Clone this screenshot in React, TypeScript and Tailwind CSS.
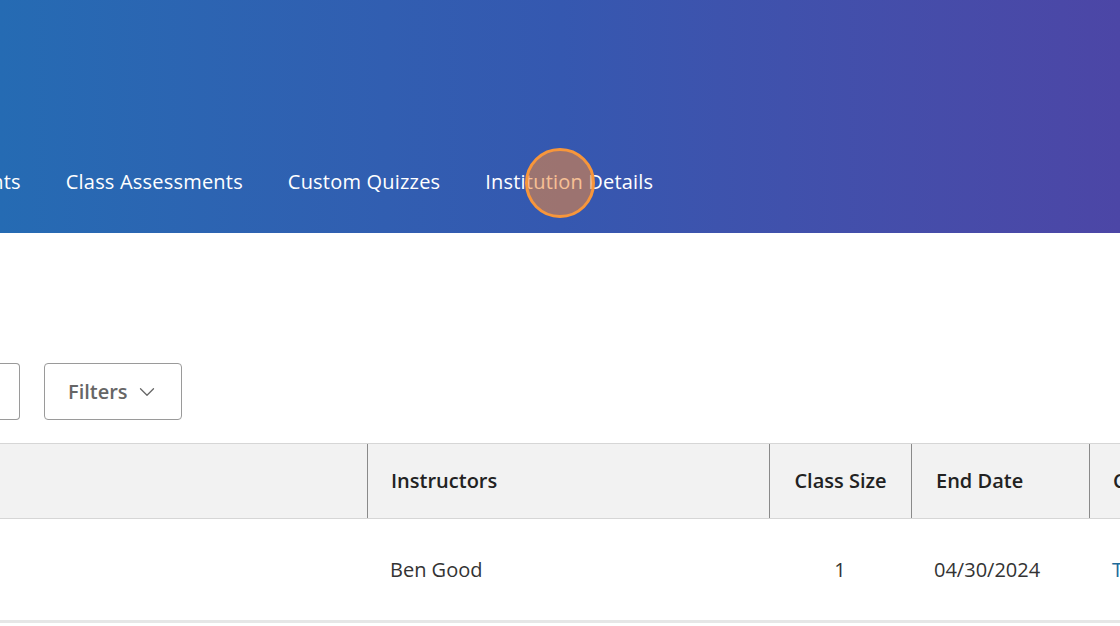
import React from 'react';
import { ChevronDown } from 'lucide-react';

const navItems = ['Assignments', 'Class Assessments', 'Custom Quizzes', 'Institution Details'];

const columns = [
  { label: '', cls: '' },
  { label: 'Instructors', cls: 'pl-[23px]' },
  { label: 'Class Size', cls: 'justify-center' },
  { label: 'End Date', cls: 'pl-[24px]' },
  { label: 'Code', cls: 'pl-[23px]' },
];

export default function App() {
  return (
    <div className="w-[1120px] h-[626px] overflow-hidden bg-white font-['Open_Sans',sans-serif] relative">
      {/* --- Header band --- */}
      <div className="h-[233px] bg-gradient-to-r from-[#256bb3] via-[#3558b0] to-[#4c46a6] flex items-end overflow-hidden">
        <nav className="flex gap-[45px] h-[63px] ml-[-100px] whitespace-nowrap">
          {navItems.map((item) => (
            <span key={item} className="text-white text-[20px] leading-none pt-[2px] tracking-[0.2px]">
              {item}
            </span>
          ))}
        </nav>
      </div>

      {/* --- Search / Filters row --- */}
      <div className="flex gap-[24px] mt-[130px] h-[57px]">
        <div className="w-[20px] h-full border border-l-0 border-[#9a9a9a] rounded-r-[4px]" />
        <button className="h-full w-[138px] border border-[#9a9a9a] rounded-[4px] flex items-center pl-[23px] gap-[6px] text-[#666] text-[20px] font-semibold">
          Filters
          <ChevronDown className="w-[26px] h-[26px] text-[#666]" strokeWidth={1.2} />
        </button>
      </div>

      {/* --- Table --- */}
      <div className="mt-[23px] w-[1200px]">
        <div className="grid grid-cols-[367px_402px_142px_178px_1fr] h-[76px] bg-[#f2f2f2] border-t border-b border-[#d6d6d6]">
          {columns.map((c, i) => (
            <div
              key={i}
              className={`flex items-center text-[20px] font-semibold text-[#222] ${c.cls} ${i > 0 ? 'border-l border-[#8a8a8a]' : ''}`}
            >
              {c.label}
            </div>
          ))}
        </div>
        <div className="grid grid-cols-[367px_402px_142px_178px_1fr] h-[104px] border-b-[3px] border-[#e6e6e6] text-[20px] text-[#333]">
          <div />
          <div className="flex items-center pl-[23px]">Ben Good</div>
          <div className="flex items-center justify-center">1</div>
          <div className="flex items-center pl-[23px]">04/30/2024</div>
          <div className="flex items-center pl-[23px] text-[#1f6a9a]">TRX</div>
        </div>
      </div>

      {/* click marker */}
      <div className="absolute left-[525px] top-[148px] w-[70px] h-[70px] rounded-full border-[3px] border-[#f7963b] bg-[#f08a3c]/55" />
    </div>
  );
}
